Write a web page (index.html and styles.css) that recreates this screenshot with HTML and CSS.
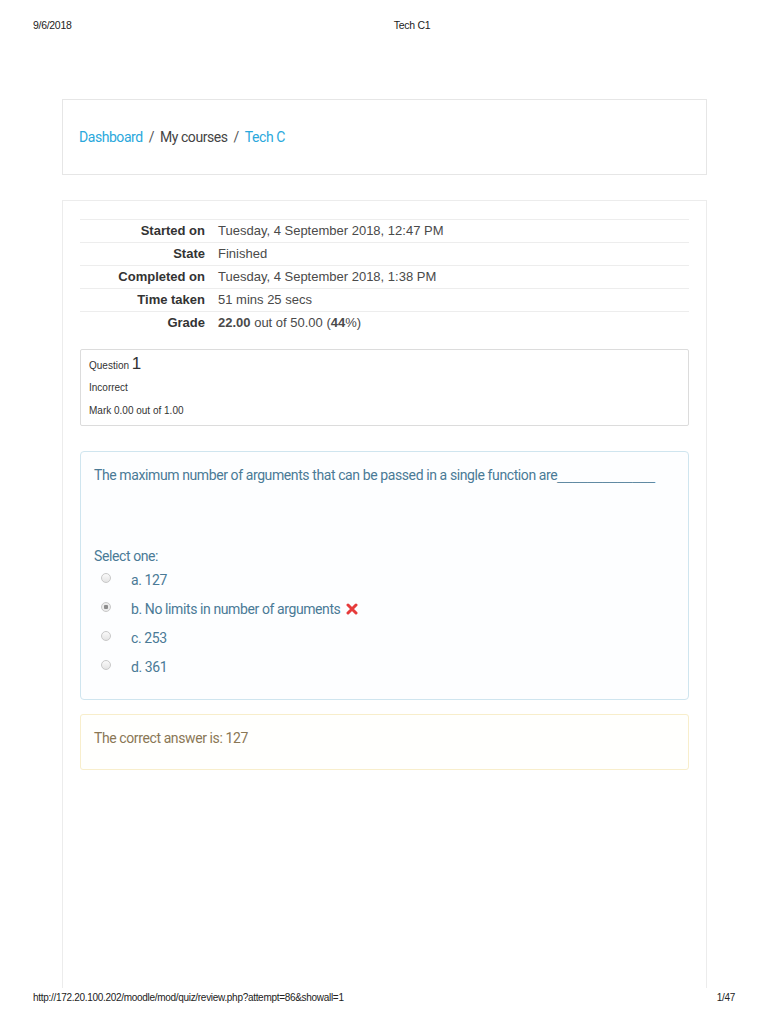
FILE: index.html
```html
<!DOCTYPE html>
<html>
<head>
<meta charset="utf-8">
<title>Tech C1</title>
<link rel="stylesheet" href="styles.css">
</head>
<body>
<div class="page">
  <header class="print-head">
    <span class="ph-date">9/6/2018</span>
    <span class="ph-title">Tech C1</span>
    <span></span>
  </header>

  <nav class="crumb-card">
    <a class="crumb-link" href="#">Dashboard</a><span class="sep">/</span><span class="crumb-plain">My courses</span><span class="sep">/</span><a class="crumb-link" href="#">Tech C</a>
  </nav>

  <main class="main-card">
    <table class="summary">
      <tr><th>Started on</th><td>Tuesday, 4 September 2018, 12:47 PM</td></tr>
      <tr><th>State</th><td>Finished</td></tr>
      <tr><th>Completed on</th><td>Tuesday, 4 September 2018, 1:38 PM</td></tr>
      <tr><th>Time taken</th><td>51 mins 25 secs</td></tr>
      <tr><th>Grade</th><td><b>22.00</b> out of 50.00 (<b>44</b>%)</td></tr>
    </table>

    <div class="qinfo">
      <div class="qno">Question <span class="qnum">1</span></div>
      <div class="qstate">Incorrect</div>
      <div class="qgrade">Mark 0.00 out of 1.00</div>
    </div>

    <div class="formulation">
      <p class="qtext">The maximum number of arguments that can be passed in a single function are<span class="blank">_____________</span></p>
      <div class="prompt">Select one:</div>
      <div class="answers">
        <label class="opt"><span class="radio"></span><span>a. 127</span></label>
        <label class="opt"><span class="radio checked"></span><span>b. No limits in number of arguments</span>
          <svg class="xicon" viewBox="0 0 12 12" width="12" height="12"><path d="M2 2 L10 10 M10 2 L2 10" stroke="#e63b3b" stroke-width="3" stroke-linecap="round"/></svg>
        </label>
        <label class="opt"><span class="radio"></span><span>c. 253</span></label>
        <label class="opt"><span class="radio"></span><span>d. 361</span></label>
      </div>
    </div>

    <div class="feedback">The correct answer is: 127</div>
  </main>

  <footer class="print-foot">
    <span>http://172.20.100.202/moodle/mod/quiz/review.php?attempt=86&amp;showall=1</span>
    <span>1/47</span>
  </footer>
</div>
</body>
</html>
```

FILE: styles.css
```css
html, body {
  margin: 0;
  padding: 0;
  background: #fff;
}
.page {
  width: 768px;
  height: 1024px;
  display: flex;
  flex-direction: column;
  font-family: "Liberation Sans", Arial, sans-serif;
  color: #333;
  overflow: hidden;
}
.print-head {
  display: grid;
  grid-template-columns: 1fr auto 1fr;
  padding: 19px 33px 0 33px;
  height: 30px;
  font-size: 10.5px;
  line-height: 12px;
  color: #222;
  letter-spacing: -0.3px;
}
.ph-title {
  padding-left: 56px;
}
.crumb-card {
  margin: 50px 0 0 62px;
  width: 645px;
  height: 76px;
  box-sizing: border-box;
  border: 1px solid #e6e6e6;
  padding: 0 16px;
  display: flex;
  align-items: center;
  font-family: Roboto, "Liberation Sans", sans-serif;
  font-size: 14px;
  letter-spacing: -0.45px;
}
.crumb-link {
  color: #2aa8dc;
  text-decoration: none;
}
.crumb-plain {
  color: #444;
}
.sep {
  color: #555;
  padding: 0 6px;
}
.main-card {
  margin: 25px 0 0 62px;
  width: 645px;
  height: 788px;
  box-sizing: border-box;
  border: 1px solid #ececec;
  border-bottom: none;
  padding: 18px 17px 0 17px;
}
.summary {
  width: 100%;
  border-collapse: collapse;
  font-size: 13px;
}
.summary tr {
  border-top: 1px solid #ededed;
}
.summary th, .summary td {
  height: 22px;
  padding: 0;
  line-height: 22px;
  vertical-align: middle;
}
.summary th {
  width: 125px;
  text-align: right;
  color: #333;
  padding-right: 13px;
}
.summary td {
  color: #4a4a4a;
}
.qinfo {
  margin-top: 15px;
  height: 77px;
  box-sizing: border-box;
  border: 1px solid #dcdcdc;
  border-radius: 2px;
  padding: 5px 8px 0 8px;
  font-size: 10px;
  color: #333;
}
.qno {
  line-height: 18px;
}
.qnum {
  font-size: 17px;
}
.qstate {
  margin-top: 7px;
  line-height: 12px;
}
.qgrade {
  margin-top: 11px;
  line-height: 12px;
}
.formulation {
  margin-top: 25px;
  height: 249px;
  box-sizing: border-box;
  border: 1px solid #cfe5ef;
  border-radius: 4px;
  background: #fdfeff;
  padding: 14px 13px 0 13px;
  font-family: Roboto, "Liberation Sans", sans-serif;
  font-size: 14px;
  letter-spacing: -0.4px;
  color: #4a7a96;
}
.qtext {
  margin: 0;
  height: 18px;
  line-height: 18px;
}
.blank {
  font-family: "Liberation Sans", Arial, sans-serif;
  font-size: 13.5px;
  letter-spacing: 0;
}
.prompt {
  margin-top: 63px;
  line-height: 18px;
}
.answers {
  display: flex;
  flex-direction: column;
  gap: 11px;
  margin-top: 6px;
  padding-left: 6px;
}
.opt {
  display: flex;
  align-items: center;
  height: 18px;
  line-height: 18px;
}
.radio {
  width: 10px;
  height: 10px;
  border-radius: 50%;
  border: 1px solid #c8c8c8;
  background: linear-gradient(#fafafa, #e4e4e4);
  margin: 0 20px 0 1px;
  box-sizing: border-box;
  position: relative;
  top: -2px;
}
.radio.checked {
  background: radial-gradient(circle, #8d8d8d 0 2px, #ececec 2.5px);
}
.xicon {
  margin-left: 6px;
}
.feedback {
  margin-top: 14px;
  height: 56px;
  box-sizing: border-box;
  border: 1px solid #f8eecb;
  border-radius: 3px;
  background: #fffffd;
  padding: 14px 13px 0 13px;
  font-family: Roboto, "Liberation Sans", sans-serif;
  font-size: 14px;
  letter-spacing: -0.4px;
  line-height: 18px;
  color: #8a7755;
}
.print-foot {
  display: flex;
  justify-content: space-between;
  padding: 4px 33px 0 33px;
  font-size: 10px;
  line-height: 12px;
  color: #222;
  letter-spacing: -0.3px;
}
```
